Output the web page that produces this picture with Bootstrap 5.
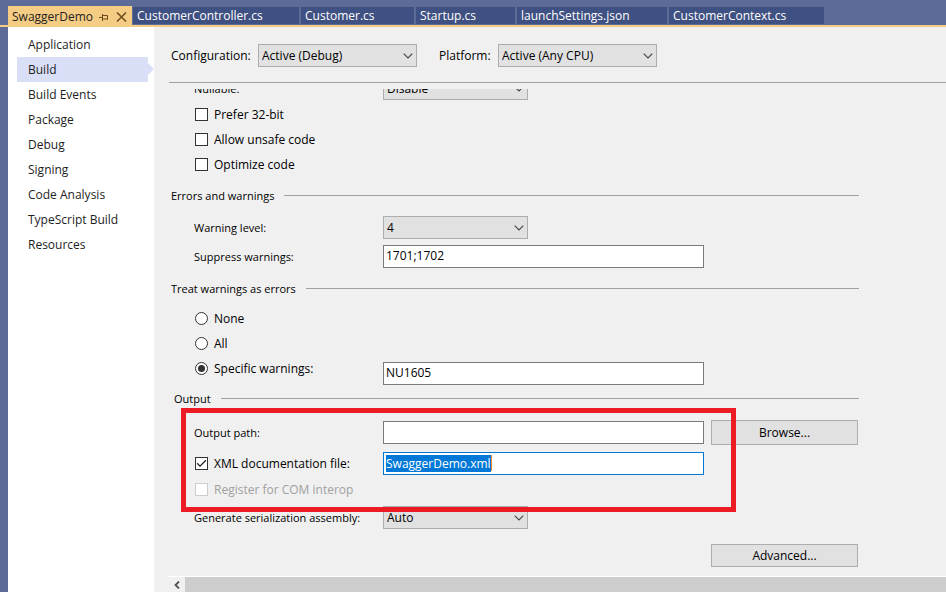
<!DOCTYPE html>
<html lang="en">
<head>
<meta charset="utf-8">
<meta name="viewport" content="width=device-width, initial-scale=1">
<title>SwaggerDemo - Build</title>
<link href="https://cdn.jsdelivr.net/npm/bootstrap@5.3.0/dist/css/bootstrap.min.css" rel="stylesheet">
<style>
  body { font-family: "Open Sans", "Noto Sans", sans-serif; font-size: 12px; line-height: 16px; color: #000; background: #5d6b99; }
  label { white-space: nowrap; }

  /* document tabs */
  .doc-tabs { padding: 6px 0 0 8px; border-bottom: 2px solid #f5cc84; height: 27px; }
  .doc-active { width: 124px; background: #f5cc84; color: #1e1e1e; padding: 2px 5px 0 4px; }
  .doc-active a { color: inherit; }
  .doc-active button { line-height: 0; color: #6b4c1c; }
  .doc-others { display: grid; grid-template-columns: 166px 113px 99px 150px 155px; column-gap: 2px; padding: 1px 0 1px 1px; }
  .doc-others a { background: #3f5082; color: #fff; padding-left: 4px; line-height: 17px; white-space: nowrap; }

  /* property page list */
  .workspace { margin-left: 8px; min-height: 0; }
  .side { width: 146px; padding: 5px 6px 0 9px; background: #fff; }
  .side a { height: 25px; line-height: 25px; padding: 0 0 0 11px; color: #1e1e1e; border: 0; border-radius: 0; background: none; }
  .side .list-group-item.active { background: #dadff8; color: #1e1e1e; position: relative; margin-top: 0; }
  .side a.active::after { content: ""; position: absolute; left: 100%; top: 6px; border: 6px solid transparent; border-left-color: #dadff8; border-right: 0; }

  /* configuration bar */
  .page-area { background: #f0f0f0; min-width: 0; }
  .config-bar { margin-left: 15px; padding: 17px 0 15px 2px; border-bottom: 1px solid #a0a0a0; }
  .config-bar .form-select { width: 159px; }
  .config-bar .first { margin-right: 22px; }
  .cfg-label { width: 87px; }
  .plat-label { width: 59px; }

  /* controls */
  .form-select, .form-control, .push { height: 23px; font-size: 12px; line-height: 15px; border-radius: 0; color: #000; }
  .form-select { border: 1px solid #adadad; padding: 0 20px 0 3px; background: #e1e1e1 url("data:image/svg+xml,%3Csvg xmlns='http://www.w3.org/2000/svg' viewBox='0 0 10 6'%3E%3Cpath d='M.7.7 5 5 9.3.7' fill='none' stroke='%23444' stroke-width='1.1'/%3E%3C/svg%3E") no-repeat right 3px center / 10px 6px; }
  .narrow { width: 145px; }
  .form-control { border: 1px solid #7a7a7a; padding: 0 2px 2px; background: #fff; }
  .form-control:focus, .form-control.current { border-color: #0078d7; box-shadow: none; padding-bottom: 0; color: #000; }
  .form-control::selection { background: #0078d7; color: #fff; }
  .text-caret { position: absolute; left: 108px; top: 3px; width: 1px; height: 16px; background: #f28a32; }
  .push { border: 1px solid #adadad; background: #e1e1e1; padding: 0; }
  .push.tall { height: 25px; }
  .opt { height: 25px; gap: 6px; padding-left: 1px; }
  .opt .form-check-input { width: 13px; height: 13px; margin: 0; border: 1px solid #333; background-color: #fff; background-size: 11px 11px; }
  .opt .form-check-input[type=checkbox] { border-radius: 0; }
  .opt .form-check-input[type=checkbox]:checked { background-image: url("data:image/svg+xml,%3Csvg xmlns='http://www.w3.org/2000/svg' viewBox='0 0 11 11'%3E%3Cpath d='M1.2 5.3 4 8.1 9.9 2.2' fill='none' stroke='%23222' stroke-width='1.3'/%3E%3C/svg%3E"); }
  .opt .form-check-input[type=radio]:checked { background-image: url("data:image/svg+xml,%3Csvg xmlns='http://www.w3.org/2000/svg' viewBox='0 0 11 11'%3E%3Ccircle cx='5.5' cy='5.5' r='3.5' fill='%23333'/%3E%3C/svg%3E"); }
  .opt .form-check-input:disabled { opacity: 1; border-color: #ccc; }
  .opt .form-check-input:disabled ~ label { opacity: 1; color: #a0a0a0; }

  /* build settings form */
  .scroller { margin: 6px 0 0 17px; min-height: 0; }
  .sheet { max-width: 688px; margin-top: -12px; }
  .line { display: grid; grid-template-columns: 182px 321px 147px; column-gap: 7px; padding-left: 23px; align-items: center; }
  .line > label, .section-head { font-size: 11px; }
  .section-head { line-height: 22px; margin: 0; font-weight: 400; gap: 10px; }
  .section-head::after { content: ""; flex: 1; height: 1px; margin-bottom: 2px; background: #a0a0a0; }
  .checks { padding: 2px 0 0 23px; }
  .level { margin-top: 9px; }
  .suppress { margin-top: 6px; }
  .treat { margin-top: 10px; }
  .radios { margin-top: 6px; min-height: 79px; }
  .radio-set { align-self: start; }
  .output { margin: 3px 0 10px; padding-left: 3px; }
  .xml { margin-top: 6px; margin-bottom: 1px; }
  .advanced { margin-top: 15px; }
  .advanced button { grid-column: 3; }
  .marked { position: relative; }
  .highlight { position: absolute; left: 10px; right: 123px; top: -12px; bottom: -10px; border: 5px solid #ed1c24; pointer-events: none; }

  /* horizontal scroll bar */
  .hbar { margin-left: 14px; height: 16px; border-top: 1px solid #fff; }
  .hbar button { width: 17px; line-height: 0; }
  .thumb { background: #cdcdcd; }
</style>
<script src="https://cdn.jsdelivr.net/npm/bootstrap@5.3.0/dist/js/bootstrap.bundle.min.js"></script>
</head>
<body class="vh-100 d-flex flex-column overflow-hidden">
  <nav class="doc-tabs d-flex flex-shrink-0" aria-label="Open documents">
    <div class="doc-active d-flex align-items-center">
      <a href="#" class="text-decoration-none me-auto">SwaggerDemo</a>
      <button type="button" class="btn border-0 p-0 me-2" aria-label="Pin tab">
        <svg width="9" height="8" viewBox="0 0 9 8" fill="none" stroke="currentColor"><path d="M0 4.500h3M3.500 1v7M4 2.500h4.500v4M4 6h5"/></svg>
      </button>
      <button type="button" class="btn border-0 p-0" aria-label="Close tab">
        <svg width="11" height="10" viewBox="0 0 11 10" fill="none" stroke="currentColor" stroke-width="1.5"><path d="M1 .5l9 9M10 .5l-9 9"/></svg>
      </button>
    </div>
    <div class="doc-others">
      <a href="#" class="text-decoration-none">CustomerController.cs</a>
      <a href="#" class="text-decoration-none">Customer.cs</a>
      <a href="#" class="text-decoration-none">Startup.cs</a>
      <a href="#" class="text-decoration-none">launchSettings.json</a>
      <a href="#" class="text-decoration-none">CustomerContext.cs</a>
    </div>
  </nav>

  <div class="workspace d-flex flex-grow-1">
    <nav class="side list-group rounded-0 flex-shrink-0" aria-label="Project properties">
      <a href="#" class="list-group-item">Application</a>
      <a href="#" class="list-group-item active" aria-current="page">Build</a>
      <a href="#" class="list-group-item">Build Events</a>
      <a href="#" class="list-group-item">Package</a>
      <a href="#" class="list-group-item">Debug</a>
      <a href="#" class="list-group-item">Signing</a>
      <a href="#" class="list-group-item">Code Analysis</a>
      <a href="#" class="list-group-item">TypeScript Build</a>
      <a href="#" class="list-group-item">Resources</a>
    </nav>

    <main class="page-area flex-grow-1 d-flex flex-column">
      <div class="config-bar d-flex align-items-center">
        <label for="configuration" class="cfg-label">Configuration:</label>
        <select id="configuration" class="form-select first"><option>Active (Debug)</option></select>
        <label for="platform" class="plat-label">Platform:</label>
        <select id="platform" class="form-select"><option>Active (Any CPU)</option></select>
      </div>

      <div class="scroller flex-grow-1 overflow-hidden">
        <form class="sheet">
          <div class="line">
            <label for="nullable">Nullable:</label>
            <select id="nullable" class="form-select narrow"><option>Disable</option></select>
          </div>
          <div class="checks">
            <div class="opt d-flex align-items-center"><input class="form-check-input" type="checkbox" id="prefer32"><label for="prefer32">Prefer 32-bit</label></div>
            <div class="opt d-flex align-items-center"><input class="form-check-input" type="checkbox" id="unsafe"><label for="unsafe">Allow unsafe code</label></div>
            <div class="opt d-flex align-items-center"><input class="form-check-input" type="checkbox" id="optimize"><label for="optimize">Optimize code</label></div>
          </div>

          <h2 class="section-head d-flex align-items-center mt-2">Errors and warnings</h2>
          <div class="line level">
            <label for="level">Warning level:</label>
            <select id="level" class="form-select narrow"><option>4</option></select>
          </div>
          <div class="line suppress">
            <label for="suppress">Suppress warnings:</label>
            <input id="suppress" class="form-control" type="text" value="1701;1702">
          </div>

          <h2 class="section-head treat d-flex align-items-center">Treat warnings as errors</h2>
          <div class="line radios align-items-end">
            <div class="radio-set">
              <div class="opt d-flex align-items-center"><input class="form-check-input" type="radio" name="treat" id="none"><label for="none">None</label></div>
              <div class="opt d-flex align-items-center"><input class="form-check-input" type="radio" name="treat" id="all"><label for="all">All</label></div>
              <div class="opt d-flex align-items-center"><input class="form-check-input" type="radio" name="treat" id="specific" checked><label for="specific">Specific warnings:</label></div>
            </div>
            <input class="form-control" type="text" value="NU1605" aria-label="Specific warnings">
          </div>

          <h2 class="section-head output d-flex align-items-center">Output</h2>
          <div class="marked">
            <div class="line">
              <label for="outpath">Output path:</label>
              <input id="outpath" class="form-control" type="text">
              <button type="button" class="btn push tall">Browse...</button>
            </div>
            <div class="line xml">
              <div class="opt d-flex align-items-center"><input class="form-check-input" type="checkbox" id="xmldoc" checked><label for="xmldoc">XML documentation file:</label></div>
              <div class="position-relative">
                <input id="xmlfile" class="form-control current" type="text" value="SwaggerDemo.xml" aria-label="XML documentation file path">
                <span class="text-caret"></span>
              </div>
            </div>
            <div class="line">
              <div class="opt d-flex align-items-center"><input class="form-check-input" type="checkbox" id="com" disabled><label for="com">Register for COM interop</label></div>
            </div>
            <div class="highlight"></div>
          </div>
          <div class="line mt-1">
            <label for="serialization">Generate serialization assembly:</label>
            <select id="serialization" class="form-select narrow"><option>Auto</option></select>
          </div>
          <div class="line advanced">
            <button type="button" class="btn push">Advanced...</button>
          </div>
        </form>
      </div>

      <div class="hbar d-flex flex-shrink-0">
        <button type="button" class="btn border-0 p-0" aria-label="Scroll left">
          <svg width="6" height="8" viewBox="0 0 6 8" fill="none" stroke="#505050" stroke-width="1.8"><path d="M5 .5 1.500 4 5 7.500"/></svg>
        </button>
        <div class="thumb flex-grow-1"></div>
      </div>
    </main>
  </div>
  <script>
    const field = document.getElementById("xmlfile");
    field.focus();
    field.select();
  </script>
</body>
</html>
